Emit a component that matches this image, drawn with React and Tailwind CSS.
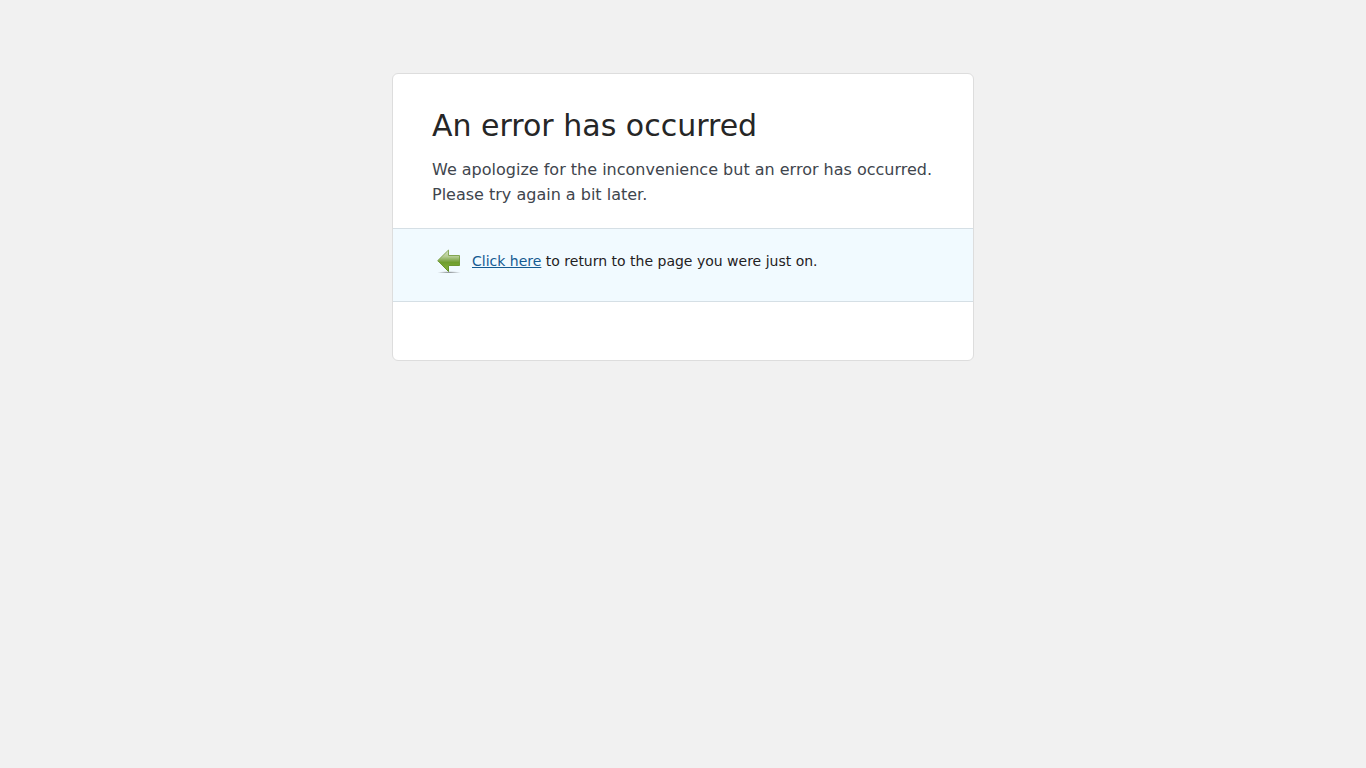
import React from "react";

function BackArrow() {
  return (
    <svg className="h-8 w-8 shrink-0" viewBox="0 0 32 32" aria-hidden="true">
      <defs>
        <linearGradient id="arrowFill" x1="0" y1="0" x2="0" y2="1">
          <stop offset="0" stopColor="#d5e2c3" />
          <stop offset="0.3" stopColor="#b5cc93" />
          <stop offset="0.5" stopColor="#82a94c" />
          <stop offset="0.58" stopColor="#6f9e2e" />
          <stop offset="1" stopColor="#86b53c" />
        </linearGradient>
        <linearGradient id="arrowEdge" x1="0" y1="0" x2="0" y2="1">
          <stop offset="0" stopColor="#8fae64" />
          <stop offset="1" stopColor="#5f8e1f" />
        </linearGradient>
        <radialGradient id="arrowShadow">
          <stop offset="0" stopColor="#000" stopOpacity="0.45" />
          <stop offset="1" stopColor="#000" stopOpacity="0" />
        </radialGradient>
      </defs>
      <ellipse cx="17" cy="27.3" rx="12" ry="1.1" fill="url(#arrowShadow)" />
      <path
        d="M5.700 15.700 L16.500 5 V10.500 H27.500 V20.500 H16.500 V26.500 Z"
        fill="url(#arrowFill)"
        stroke="url(#arrowEdge)"
        strokeWidth="1"
      />
    </svg>
  );
}

export default function App() {
  return (
    <div className="min-h-screen bg-[#f1f1f1] px-4 pt-[73px] font-['DejaVu_Sans',sans-serif]">
      <main className="mx-auto max-w-[582px] rounded-md border border-[#dddddd] bg-white pb-[58px]">
        <header className="px-[39px] pt-8 pb-[21px]">
          <h1 className="text-[30px] leading-10 text-[#262626]">An error has occurred</h1>
          <p className="mt-[11px] text-base leading-[25px] text-[#40454d]">
            We apologize for the inconvenience but an error has occurred. Please try again a bit later.
          </p>
        </header>
        <section className="flex items-start gap-2 border-y border-[#d5dfe5] bg-[#f1faff] px-[39px] pt-4 pb-6 text-sm text-[#1f2123]">
          <BackArrow />
          <p className="leading-8">
            <a href="#" className="text-[#165b92] underline">Click here</a> to return to the page you were just on.
          </p>
        </section>
      </main>
    </div>
  );
}
